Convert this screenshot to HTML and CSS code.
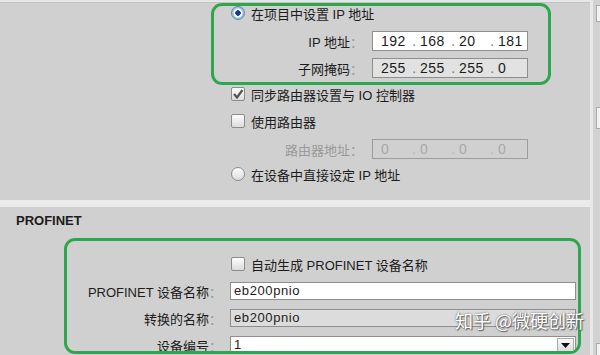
FILE: index.html
```html
<!DOCTYPE html>
<html lang="zh-CN">
  <head>
    <meta charset="UTF-8" />
    <title>PROFINET 接口属性</title>
    <link rel="stylesheet" href="styles.css">
  </head>
  <body>
    <div class="screen">
      <div class="main">
        <div class="top-line"></div>

        <!-- IP 协议 -->
        <section class="panel panel-ip">
          <div class="hl-box ip-box">
            <div class="row opt-row">
              <span class="radio on"></span>
              <span>在项目中设置 IP 地址</span>
            </div>
            <div class="row field-row first-field">
              <span class="label">IP 地址<i class="colon">：</i></span>
              <div class="ip-input">
                <span class="seg">192</span><span class="dot">.</span>
                <span class="seg">168</span><span class="dot">.</span>
                <span class="seg">20</span><span class="dot">.</span>
                <span class="seg">181</span>
              </div>
            </div>
            <div class="row field-row">
              <span class="label">子网掩码<i class="colon">：</i></span>
              <div class="ip-input readonly">
                <span class="seg">255</span><span class="dot">.</span>
                <span class="seg">255</span><span class="dot">.</span>
                <span class="seg">255</span><span class="dot">.</span>
                <span class="seg">0</span>
              </div>
            </div>
          </div>

          <div class="row opt-row indent sync-row">
            <span class="check on">
              <svg width="14" height="14" viewBox="0 0 14 14"><polyline points="3,7 6,10.5 11.5,3" fill="none" stroke="#555" stroke-width="2.2"/></svg>
            </span>
            <span>同步路由器设置与 IO 控制器</span>
          </div>
          <div class="row opt-row indent router-row">
            <span class="check"></span>
            <span>使用路由器</span>
          </div>
          <div class="row field-row indent-field router-addr">
            <span class="label disabled">路由器地址<i class="colon">：</i></span>
            <div class="ip-input disabled">
              <span class="seg">0</span><span class="dot">.</span>
              <span class="seg">0</span><span class="dot">.</span>
              <span class="seg">0</span><span class="dot">.</span>
              <span class="seg">0</span>
            </div>
          </div>
          <div class="row opt-row indent direct-row">
            <span class="radio"></span>
            <span>在设备中直接设定 IP 地址</span>
          </div>
        </section>

        <div class="sep"></div>

        <!-- PROFINET -->
        <section class="panel panel-pn">
          <h2>PROFINET</h2>
          <div class="hl-box pn-box">
            <div class="row opt-row pn-check">
              <span class="check"></span>
              <span>自动生成 PROFINET 设备名称</span>
            </div>
            <div class="row pn-row">
              <span class="pn-label">PROFINET 设备名称<i class="colon">：</i></span>
              <div class="text-input">eb200pnio</div>
            </div>
            <div class="row pn-row">
              <span class="pn-label">转换的名称<i class="colon">：</i></span>
              <div class="text-input readonly">eb200pnio</div>
            </div>
            <div class="row pn-row">
              <span class="pn-label">设备编号<i class="colon">：</i></span>
              <div class="text-input select">
                <span>1</span>
                <span class="drop"><svg width="9" height="5" viewBox="0 0 9 5"><polygon points="0,0 9,0 4.5,5" fill="#111"/></svg></span>
              </div>
            </div>
          </div>
          <div class="watermark">知乎 @微硬创新</div>
        </section>
      </div>

      <div class="side">
        <div class="side-line"></div>
        <div class="side-bar">
          <span class="side-knob k1"></span>
          <span class="side-knob k2"></span>
          <span class="side-knob k3"></span>
        </div>
      </div>
    </div>
  </body>
</html>
```

FILE: styles.css
```css
html,
body {
  margin: 0;
  padding: 0;
}

body {
  font-family: "Liberation Sans", "Noto Sans CJK SC", sans-serif;
  font-size: 13px;
  color: #1c1c1c;
  background-color: #d0d0d0;
}

.screen {
  display: flex;
  width: 600px;
  height: 355px;
  overflow: hidden;
}

.main {
  width: 590px;
  display: flex;
  flex-direction: column;
}

.top-line {
  height: 3px;
  background-color: #e6e6e6;
  border-bottom: 1px solid #c4c4c4;
  box-sizing: border-box;
}

.panel {
  background-color: #d0d0d0;
  position: relative;
}

.panel-ip {
  height: 197px;
}

.sep {
  height: 7px;
  background-color: #ebebeb;
}

.panel-pn {
  flex: 1;
}

/* recuadros verdes */
.hl-box {
  border: 3px solid #2ea64e;
  border-radius: 11px;
  box-sizing: border-box;
  overflow: hidden;
}

.ip-box {
  margin-left: 211px;
  width: 340px;
  height: 82px;
  padding-left: 17px;
}

.row {
  display: flex;
  align-items: center;
}

.opt-row {
  height: 14px;
  gap: 6px;
  white-space: nowrap;
}

.field-row {
  height: 20px;
  margin-top: 7px;
}

.first-field {
  margin-top: 11px;
}

.label {
  width: 132px;
  text-align: right;
  margin-right: 9px;
  white-space: nowrap;
}

.label.disabled {
  color: #9a9a9a;
}

.colon {
  font-style: normal;
  color: #9a9a9a;
}

.ip-input {
  width: 156px;
  height: 20px;
  box-sizing: border-box;
  border: 1px solid #8e8e8e;
  background-color: #fff;
  display: flex;
  align-items: center;
  padding-left: 8px;
  font-size: 14px;
  letter-spacing: 0.5px;
}

.ip-input.readonly {
  background-color: #e2e2e2;
}

.ip-input.disabled {
  background-color: #d0d0d0;
  border-color: #9c9c9c;
  color: #a8a8a8;
}

.seg {
  width: 28px;
}

.dot {
  width: 11px;
  text-align: center;
  color: #777;
}

.ip-input.disabled .dot {
  color: #b8b8b8;
}

.indent,
.indent-field {
  margin-left: 231px;
}

.sync-row {
  margin-top: 2px;
}

.router-row {
  margin-top: 13px;
}

.router-addr {
  margin-top: 11px;
}

.direct-row {
  margin-top: 8px;
}

/* controles */
.radio,
.check {
  flex: none;
  width: 14px;
  height: 14px;
  box-sizing: border-box;
  border: 1px solid #8c8c8c;
  background: linear-gradient(#fdfdfd, #dcdcdc);
}

.radio {
  border-radius: 50%;
}

.radio.on {
  border-color: #5d87b4;
  background: radial-gradient(circle, #123e8c 0 2.5px, #ffffff 3px 4px, #9fc0e4 5px);
}

.check {
  border-radius: 2px;
  display: flex;
}

.check svg {
  margin: -1px;
}

/* PROFINET */
h2 {
  margin: 0;
  padding: 7px 0 0 16px;
  height: 24px;
  box-sizing: border-box;
  font-size: 13px;
  font-weight: bold;
  line-height: 14px;
}

.pn-box {
  margin: 7px 0 0 64px;
  width: 517px;
  height: 116px;
}

.pn-check {
  margin: 16px 0 0 164px;
}

.pn-row {
  height: 18px;
  margin-top: 9px;
}

.pn-check + .pn-row {
  margin-top: 11px;
}

.pn-label {
  width: 155px;
  margin-right: 8px;
  text-align: right;
  white-space: nowrap;
}

.text-input {
  width: 346px;
  height: 18px;
  box-sizing: border-box;
  border: 1px solid #8e8e8e;
  background-color: #fff;
  padding-left: 3px;
  font-size: 13px;
  letter-spacing: 0.6px;
  line-height: 16px;
}

.text-input.readonly {
  background-color: #dcdcdc;
}

.text-input.select {
  height: 19px;
  display: flex;
  justify-content: space-between;
}

.drop {
  width: 17px;
  height: 15px;
  margin: 1px 1px 0 0;
  border: 1px solid #aaa;
  box-sizing: border-box;
  background: linear-gradient(#fafafa, #dadada);
  display: flex;
  align-items: center;
  justify-content: center;
}

.watermark {
  position: absolute;
  left: 455px;
  top: 100px;
  font-family: "Noto Sans CJK SC", sans-serif;
  font-size: 18px;
  color: #fff;
  text-shadow: 0 0 2px #555, 1px 1px 1px #666;
  white-space: nowrap;
}

/* barra lateral */
.side {
  width: 10px;
  display: flex;
}

.side-line {
  width: 3px;
  background-color: #e8e8e8;
}

.side-bar {
  flex: 1;
  position: relative;
  background-color: #d2d2d2;
}

.side-knob {
  position: absolute;
  left: 3px;
  width: 6px;
  border: 1px solid #aaa;
  background-color: #f2f2f2;
}

.k1 {
  top: 5px;
  height: 15px;
}

.k2 {
  top: 107px;
  height: 20px;
}

.k3 {
  top: 343px;
  height: 14px;
}
```
